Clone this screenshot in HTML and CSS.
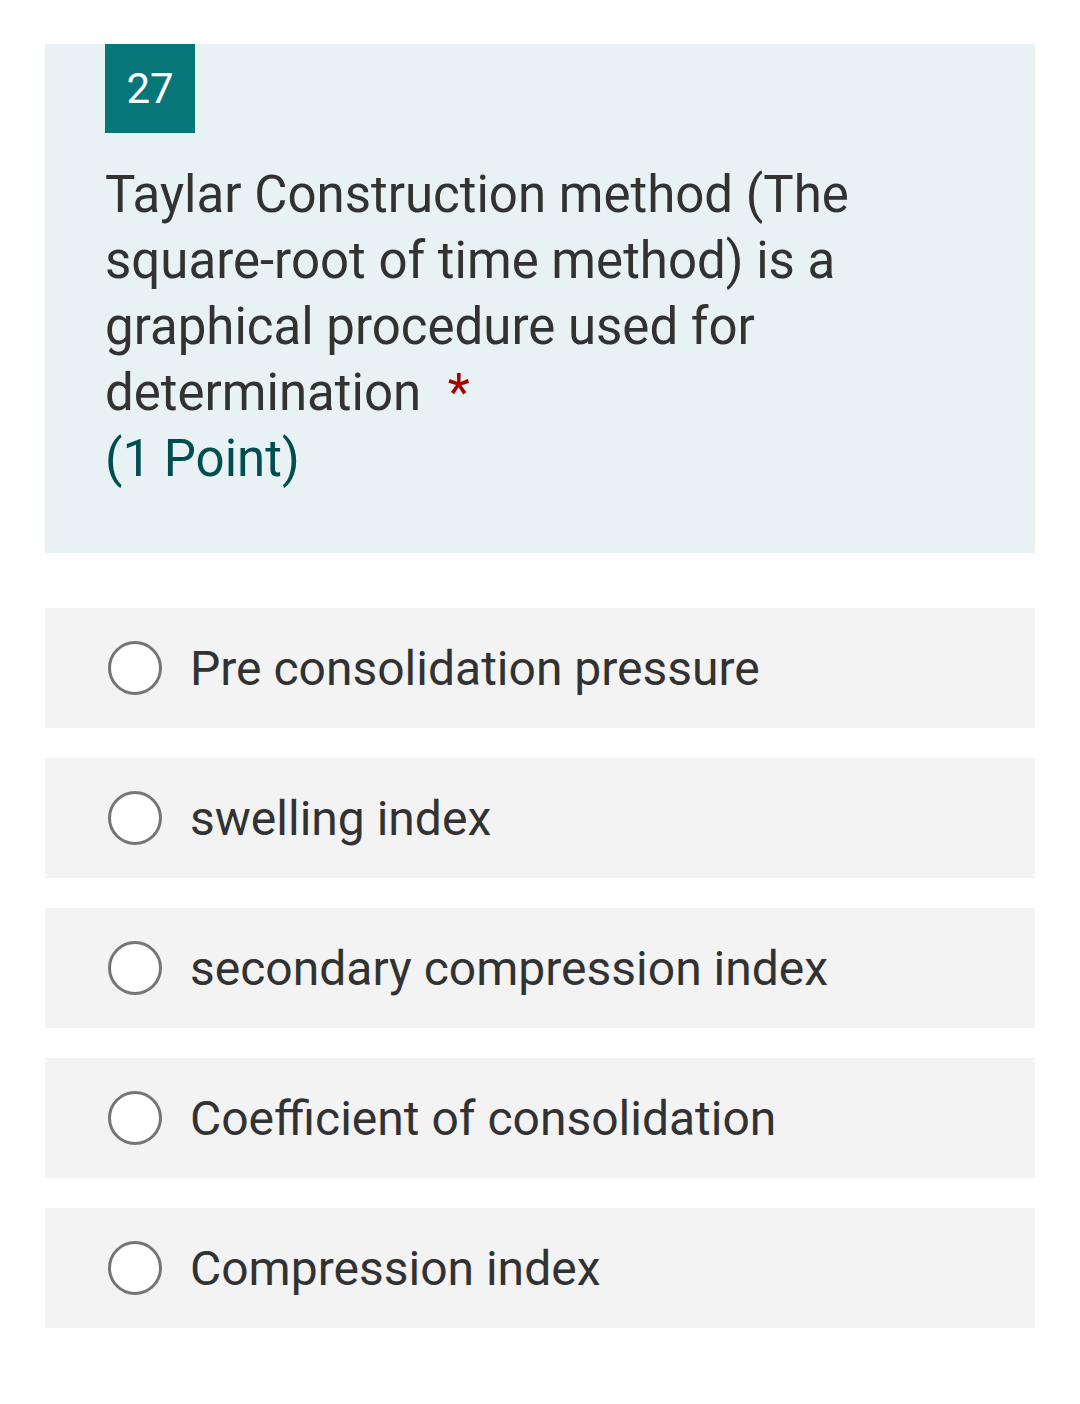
FILE: index.html
```html
<!DOCTYPE html>
<html>
<head>
<meta charset="utf-8">
<link rel="stylesheet" href="styles.css">
</head>
<body>
<div class="page">
  <section class="question">
    <div class="badge">27</div>
    <div class="qtext">Taylar Construction method (The square-root of time method) is a graphical procedure used for determination <span class="req">*</span></div>
    <div class="points">(1 Point)</div>
  </section>
  <div class="options">
    <label class="option"><span class="radio"></span><span class="otext">Pre consolidation pressure</span></label>
    <label class="option"><span class="radio"></span><span class="otext">swelling index</span></label>
    <label class="option"><span class="radio"></span><span class="otext">secondary compression index</span></label>
    <label class="option"><span class="radio"></span><span class="otext">Coefficient of consolidation</span></label>
    <label class="option"><span class="radio"></span><span class="otext">Compression index</span></label>
  </div>
</div>
</body>
</html>
```

FILE: styles.css
```css
* { box-sizing: border-box; }
html, body { margin: 0; padding: 0; background: #ffffff; }
body { font-family: Roboto, "Noto Sans", sans-serif; color: #323232; }
.page { padding: 44px 45px 0 45px; }
.question {
  background: #e8f1f4;
  padding: 0 60px 61px 60px;
}
.badge {
  width: 90px;
  height: 89px;
  background: #077679;
  color: #ffffff;
  font-size: 42px;
  display: flex;
  align-items: center;
  justify-content: center;
}
.qtext {
  margin-top: 29px;
  font-size: 51px;
  line-height: 66px;
  max-width: 850px;
}
.req { color: #a80000; margin-left: 14px; }
.points {
  font-size: 51px;
  line-height: 66px;
  color: #004e4f;
}
.options {
  margin-top: 55px;
  display: flex;
  flex-direction: column;
  gap: 30px;
}
.option {
  height: 120px;
  background: #f3f3f3;
  display: flex;
  align-items: center;
  padding-left: 63px;
}
.radio {
  width: 54px;
  height: 54px;
  border: 3px solid #757575;
  border-radius: 50%;
  background: #ffffff;
  flex: none;
}
.otext {
  margin-left: 28px;
  font-size: 48px;
  color: #323232;
}
```
